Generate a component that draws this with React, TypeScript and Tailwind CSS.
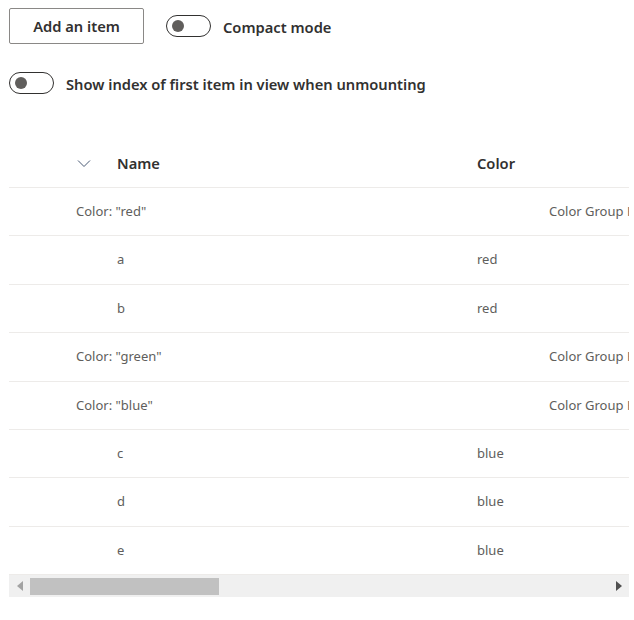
import React from "react";

type Item = { name: string; color: string };

const groups: { key: string; items: Item[] }[] = [
  { key: "red", items: [{ name: "a", color: "red" }, { name: "b", color: "red" }] },
  { key: "green", items: [] },
  {
    key: "blue",
    items: [
      { name: "c", color: "blue" },
      { name: "d", color: "blue" },
      { name: "e", color: "blue" },
    ],
  },
];

function Toggle({ label }: { label: string }) {
  return (
    <div className="flex items-center gap-[12px]">
      <button
        type="button"
        className="flex h-[22px] w-[45px] shrink-0 items-center rounded-full border border-[#323130] bg-white px-[5px]"
      >
        <span className="h-[12px] w-[12px] rounded-full bg-[#605e5c]" />
      </button>
      <span className="pt-[2px] text-[14.7px] font-semibold text-[#323130]">{label}</span>
    </div>
  );
}

function Row({ item }: { item: Item }) {
  return (
    <div className="flex h-[48.4px] items-center border-b border-[#edebe9] text-[13px] text-[#605e5c]">
      <div className="w-[108px] shrink-0" />
      <div className="w-[360px] shrink-0">{item.name}</div>
      <div className="whitespace-nowrap">{item.color}</div>
    </div>
  );
}

function GroupHeader({ color }: { color: string }) {
  return (
    <div className="flex h-[48.4px] items-center border-b border-[#edebe9] text-[13px] text-[#605e5c]">
      <div className="w-[67px] shrink-0" />
      <div className="w-[473px] shrink-0 whitespace-nowrap">Color: "{color}"</div>
      <div className="whitespace-nowrap">Color Group Header</div>
    </div>
  );
}

export default function App() {
  return (
    <div className="min-h-[620px] bg-white font-['Noto_Sans',sans-serif] text-[#323130]">
      <div className="flex items-center gap-[22px] pl-[9px] pt-[8px]">
        <button
          type="button"
          className="h-[36px] w-[135px] rounded-[2px] border border-[#8a8886] bg-white text-[14.7px] font-semibold text-[#323130]"
        >
          Add an item
        </button>
        <Toggle label="Compact mode" />
      </div>

      <div className="mt-[27px] pl-[9px]">
        <Toggle label="Show index of first item in view when unmounting" />
      </div>

      <div className="ml-[9px] mt-[47px] w-[620px] overflow-hidden">
        <div className="flex h-[46px] items-center border-b border-[#edebe9] pb-[4px] text-[14.7px] font-semibold text-[#323130]">
          <div className="flex w-[108px] shrink-0 items-center pl-[67px]">
            <svg width="16" height="16" viewBox="0 0 16 16" fill="none">
              <path d="M2 5.5 L8 11.5 L14 5.5" stroke="#4a5a75" strokeWidth="1" />
            </svg>
          </div>
          <div className="w-[360px] shrink-0">Name</div>
          <div>Color</div>
        </div>

        {groups.map((g) => (
          <React.Fragment key={g.key}>
            <GroupHeader color={g.key} />
            {g.items.map((it) => (
              <Row key={it.name} item={it} />
            ))}
          </React.Fragment>
        ))}

        <div className="flex h-[22px] items-center bg-[#f0f0f0]">
          <div className="flex w-[21px] shrink-0 justify-center">
            <svg width="6" height="10" viewBox="0 0 6 10">
              <path d="M6 0 L0 5 L6 10 Z" fill="#a3a3a3" />
            </svg>
          </div>
          <div className="h-[17px] w-[189px] shrink-0 bg-[#c1c1c1]" />
          <div className="flex-1" />
          <div className="flex w-[21px] shrink-0 justify-center">
            <svg width="6" height="10" viewBox="0 0 6 10">
              <path d="M0 0 L6 5 L0 10 Z" fill="#505050" />
            </svg>
          </div>
        </div>
      </div>
    </div>
  );
}
